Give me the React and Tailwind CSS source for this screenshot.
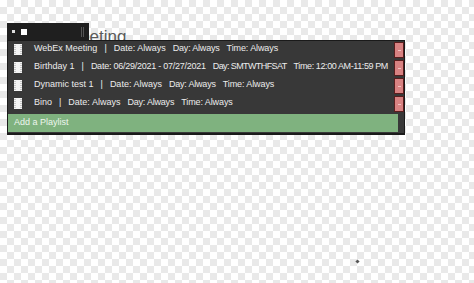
import React from "react";

function FilmIcon() {
  return (
    <svg width="8" height="11" viewBox="0 0 8 11" className="shrink-0">
      <rect x="0" y="0" width="8" height="11" fill="#f4f4f4" />
      {[1, 3, 5, 7, 9].map((y) => (
        <React.Fragment key={y}>
          <rect x="0.5" y={y} width="1" height="1" fill="#9a9a9a" />
          <rect x="6.5" y={y} width="1" height="1" fill="#9a9a9a" />
        </React.Fragment>
      ))}
    </svg>
  );
}

const rows = [
  { name: "WebEx Meeting", date: "Always", day: "Always", time: "Always", tight: false },
  { name: "Birthday 1", date: "06/29/2021 - 07/27/2021", day: "SMTWTHFSAT", time: "12:00 AM-11:59 PM", tight: true },
  { name: "Dynamic test 1", date: "Always", day: "Always", time: "Always", tight: false },
  { name: "Bino", date: "Always", day: "Always", time: "Always", tight: false },
];

export default function App() {
  return (
    <div
      className="relative w-[474px] h-[283px] overflow-hidden bg-[repeating-conic-gradient(#e9e9e9_0%_25%,#ffffff_0%_50%)] bg-[length:14px_14px]"
      style={{ fontFamily: '"Liberation Sans", Arial, sans-serif' }}
    >
      <div className="absolute left-[66px] top-[28px] h-[12px] overflow-hidden text-[17px] leading-none text-[#5a5a5a]">Meeting</div>
      <div className="relative flex flex-col pt-[23px] pl-[7px]">
        <div className="flex items-center w-[82px] h-[17px] bg-[#1f1f1f]">
          <div className="ml-[5px] w-[3px] h-[3px] bg-[#ddd]" />
          <div className="ml-[6px] w-[6px] h-[6px] bg-white" />
          <div className="ml-auto mr-[5px] flex gap-[1px] h-[10px]">
            <div className="w-[1px] h-full bg-[#555]" />
            <div className="w-[1px] h-full bg-[#555]" />
          </div>
        </div>
        <div className="w-[398px] border border-b-2 border-[#1a1a1a] bg-[#383838] flex flex-col">
          {rows.map((r) => (
            <div key={r.name} className="flex items-center h-[18px] text-[9px] text-[#ececec]">
              <div className="ml-[6px] mr-[12px] -mt-[2px]">
                <FilmIcon />
              </div>
              <div className="flex gap-[7px] whitespace-nowrap -mt-[2px]">
                <span>{r.name}</span>
                <span>|</span>
                <span className={r.tight ? "tracking-[-0.25px]" : ""}>Date: {r.date}</span>
                <span className={r.tight ? "tracking-[-0.6px]" : "tracking-[-0.2px]"}>Day: {r.day}</span>
                <span className={r.tight ? "tracking-[-0.4px]" : "tracking-[-0.1px]"}>Time: {r.time}</span>
              </div>
              <div className="ml-auto shrink-0 w-[10px] h-[16px] bg-[#d88282] border border-[#5a1e1e] flex items-center justify-center">
                <div className="w-[3px] h-[1px] bg-[#f2c0c0]" />
              </div>
            </div>
          ))}
          <div className="flex pt-[1px] pb-[1px]">
            <div className="w-[390px] h-[18px] bg-[#7fb27f] text-[9px] text-[#eef6ee] flex items-center pl-[6px]">
              Add a Playlist
            </div>
          </div>
        </div>
      </div>
      <div className="absolute left-[356px] top-[260px] w-[3px] h-[3px] bg-[#555] rotate-45" />
    </div>
  );
}
